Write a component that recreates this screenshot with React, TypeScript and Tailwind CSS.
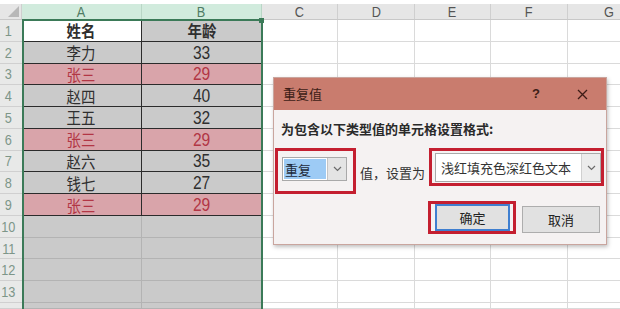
import React from "react";

type Row = { n: number; a: string; b: string; pink?: boolean; head?: boolean };

const data: Row[] = [
  { n: 1, a: "姓名", b: "年龄", head: true },
  { n: 2, a: "李力", b: "33" },
  { n: 3, a: "张三", b: "29", pink: true },
  { n: 4, a: "赵四", b: "40" },
  { n: 5, a: "王五", b: "32" },
  { n: 6, a: "张三", b: "29", pink: true },
  { n: 7, a: "赵六", b: "35" },
  { n: 8, a: "钱七", b: "27" },
  { n: 9, a: "张三", b: "29", pink: true },
  { n: 10, a: "", b: "" },
  { n: 11, a: "", b: "" },
  { n: 12, a: "", b: "" },
  { n: 13, a: "", b: "" },
  { n: 14, a: "", b: "" },
];

const cjk = { fontFamily: '"Noto Sans CJK SC", "Noto Sans", sans-serif' };
const lat = { fontFamily: '"Liberation Sans", Arial, sans-serif' };

function Chevron() {
  return (
    <svg width="9" height="6" viewBox="0 0 9 6" fill="none">
      <path d="M1 1 L4.5 4.5 L8 1" stroke="#6b6b6b" strokeWidth="1.2" />
    </svg>
  );
}

function DataRow({ r }: { r: Row }) {
  const dark = r.n <= 9;
  const last = r.n === 14;
  const bg = r.head ? "" : r.pink ? "bg-[#d9a4aa]" : "bg-[#cacaca]";
  const aBg = r.head ? "bg-white" : bg;
  const bBg = r.head ? "bg-[#cacaca]" : bg;
  const txt = r.pink ? "text-[#b23645]" : "text-[#2f2f2f]";
  const bb = dark ? "border-b-[1.5px] border-b-[#2b2b2b]" : "border-b border-b-[#b3b3b3]";
  const br = dark ? "border-r-[1.5px] border-r-[#2b2b2b]" : "border-r border-r-[#b3b3b3]";
  const weight = r.head ? "font-bold" : "font-normal";
  const isNum = /^[0-9]+$/.test(r.b);
  return (
    <div className={`flex ${last ? "flex-1" : "h-[21.77px] shrink-0"}`}>
      <div className="w-[22px] shrink-0 bg-[#e8e9e8] border-b border-b-[#d0d0d0] flex items-center justify-center pr-[5px]">
        {!last && (
          <span className="inline-block scale-x-[0.85] text-[15px] leading-none text-[#7d9688]" style={lat}>
            {r.n}
          </span>
        )}
      </div>
      <div className={`w-[120px] shrink-0 ${aBg} ${bb} ${br} flex items-center justify-center`}>
        <span className={`inline-block scale-x-[0.9] text-[16px] leading-[18px] ${txt} ${weight}`} style={cjk}>
          {r.a}
        </span>
      </div>
      <div className={`w-[120px] shrink-0 ${bBg} ${bb} flex items-center justify-center`}>
        <span
          className={`inline-block ${isNum ? "scale-x-[0.82] text-[19px] leading-[19px]" : "scale-x-[0.9] text-[16px] leading-[18px]"} ${txt} ${weight}`}
          style={isNum ? lat : cjk}
        >
          {r.b}
        </span>
      </div>
      <div className="w-[76px] shrink-0 bg-white border-b border-r border-[#dadada]" />
      <div className="w-[77px] shrink-0 bg-white border-b border-r border-[#dadada]" />
      <div className="w-[76px] shrink-0 bg-white border-b border-r border-[#dadada]" />
      <div className="w-[77px] shrink-0 bg-white border-b border-r border-[#dadada]" />
      <div className="flex-1 bg-white border-b border-[#dadada]" />
    </div>
  );
}

function ColHead({ label, w, sel }: { label: string; w: string; sel?: boolean }) {
  return (
    <div
      className={`${w} shrink-0 flex items-center justify-center border-r ${
        sel ? "bg-[#d1ebdd] border-r-[#b9d6c6]" : "bg-[#e6e6e6] border-r-[#cfcfcf]"
      }`}
    >
      <span
        className={`inline-block scale-x-[0.85] text-[15px] leading-none ${sel ? "text-[#4f7b64]" : "text-[#555555]"}`}
        style={lat}
      >
        {label}
      </span>
    </div>
  );
}

export default function App() {
  return (
    <div className="relative w-[620px] h-[309px] overflow-hidden bg-white flex flex-col">
      <div className="h-[4px] shrink-0 bg-white" />
      <div className="h-[16px] shrink-0 flex border-b border-b-[#c8c8c8]">
        <div className="w-[22px] shrink-0 bg-[#e6e6e6] border-r border-r-[#cfcfcf] relative">
          <svg className="absolute right-[2px] bottom-[2px]" width="11" height="11" viewBox="0 0 11 11">
            <path d="M11 0 L11 11 L0 11 Z" fill="#b8b8b8" />
          </svg>
        </div>
        <ColHead label="A" w="w-[120px]" sel />
        <ColHead label="B" w="w-[120px]" sel />
        <ColHead label="C" w="w-[76px]" />
        <ColHead label="D" w="w-[77px]" />
        <ColHead label="E" w="w-[76px]" />
        <ColHead label="F" w="w-[77px]" />
        <div className="flex-1 flex items-center justify-center bg-[#e6e6e6] pl-[30px]">
          <span className="inline-block scale-x-[0.85] text-[15px] leading-none text-[#555555]" style={lat}>
            G
          </span>
        </div>
      </div>
      <div className="flex-1 flex flex-col">
        {data.map((r) => (
          <DataRow key={r.n} r={r} />
        ))}
      </div>

      {/* selection border */}
      <div className="absolute left-[22px] top-[19px] w-[241px] h-[300px] border-2 border-[#3b7a58] pointer-events-none" />
      <div className="absolute left-[259px] top-[18px] w-[5px] h-[5px] bg-[#3b7a58]" />

      {/* dialog */}
      <div
        className="absolute left-[273px] top-[77px] w-[334px] h-[168px] flex flex-col bg-[#f5f2f2] border border-[#c9a59e] shadow-[1px_2px_4px_rgba(0,0,0,0.25)]"
        style={cjk}
      >
        <div className="h-[32px] shrink-0 bg-[#c97c6e] flex items-center pl-[9px] pr-[18px]">
          <span className="text-[13px] text-[#3d1c16]">重复值</span>
          <span className="ml-auto text-[13px] text-[#3d1c16] font-bold mr-[37px]" style={lat}>
            ?
          </span>
          <svg width="11" height="11" viewBox="0 0 11 11">
            <path d="M1 1 L10 10 M10 1 L1 10" stroke="#3d1c16" strokeWidth="1.3" />
          </svg>
        </div>
        <div className="pl-[7px] mt-[10px] text-[13px] leading-[18px] font-bold text-[#2a2a2a]">
          为包含以下类型值的单元格设置格式:
        </div>
        <div className="flex items-start mt-[10px] pl-[1px]">
          <div className="w-[81px] h-[46px] border-[3px] border-[#c41f30] pl-[4px] pt-[6px]">
            <div className="flex h-[24px] w-[65px] border border-[#a9a9a9] bg-white">
              <div className="flex-1 m-[1px] bg-[#9dcbf5] flex items-center pl-[1px]">
                <span className="text-[13px] leading-none text-[#1f2a3a]">重复</span>
              </div>
              <div className="w-[19px] bg-[#e4e4e4] border-l border-[#c4c4c4] flex items-center justify-center">
                <Chevron />
              </div>
            </div>
          </div>
          <div className="ml-[4px] mt-[16px] text-[13px] leading-[18px] text-[#333333]">值，设置为</div>
          <div className="ml-[4px] w-[175px] h-[38px] border-[3px] border-[#c41f30] pl-[3px] pt-[2px]">
            <div className="flex h-[29px] w-[166px] border border-[#a9a9a9] bg-white">
              <div className="flex-1 flex items-center pl-[5px]">
                <span className="text-[13px] leading-none text-[#333333]">浅红填充色深红色文本</span>
              </div>
              <div className="w-[19px] bg-[#ececec] border-l border-[#d0d0d0] flex items-center justify-center">
                <Chevron />
              </div>
            </div>
          </div>
        </div>
        <div className="flex items-start justify-end mt-[7px] pr-[6px]">
          <div className="w-[88px] h-[33px] border-[3px] border-[#c41f30] pl-[4px]">
            <div className="w-[75px] h-[27px] bg-[#e1e1e1] border-2 border-[#3f7fd0] flex items-center justify-center">
              <span className="text-[13px] leading-none text-[#222222]">确定</span>
            </div>
          </div>
          <div className="ml-[6px] mt-[5px] w-[78px] h-[27px] bg-[#e1e1e1] border border-[#adadad] flex items-center justify-center">
            <span className="text-[13px] leading-none text-[#222222]">取消</span>
          </div>
        </div>
      </div>
    </div>
  );
}
